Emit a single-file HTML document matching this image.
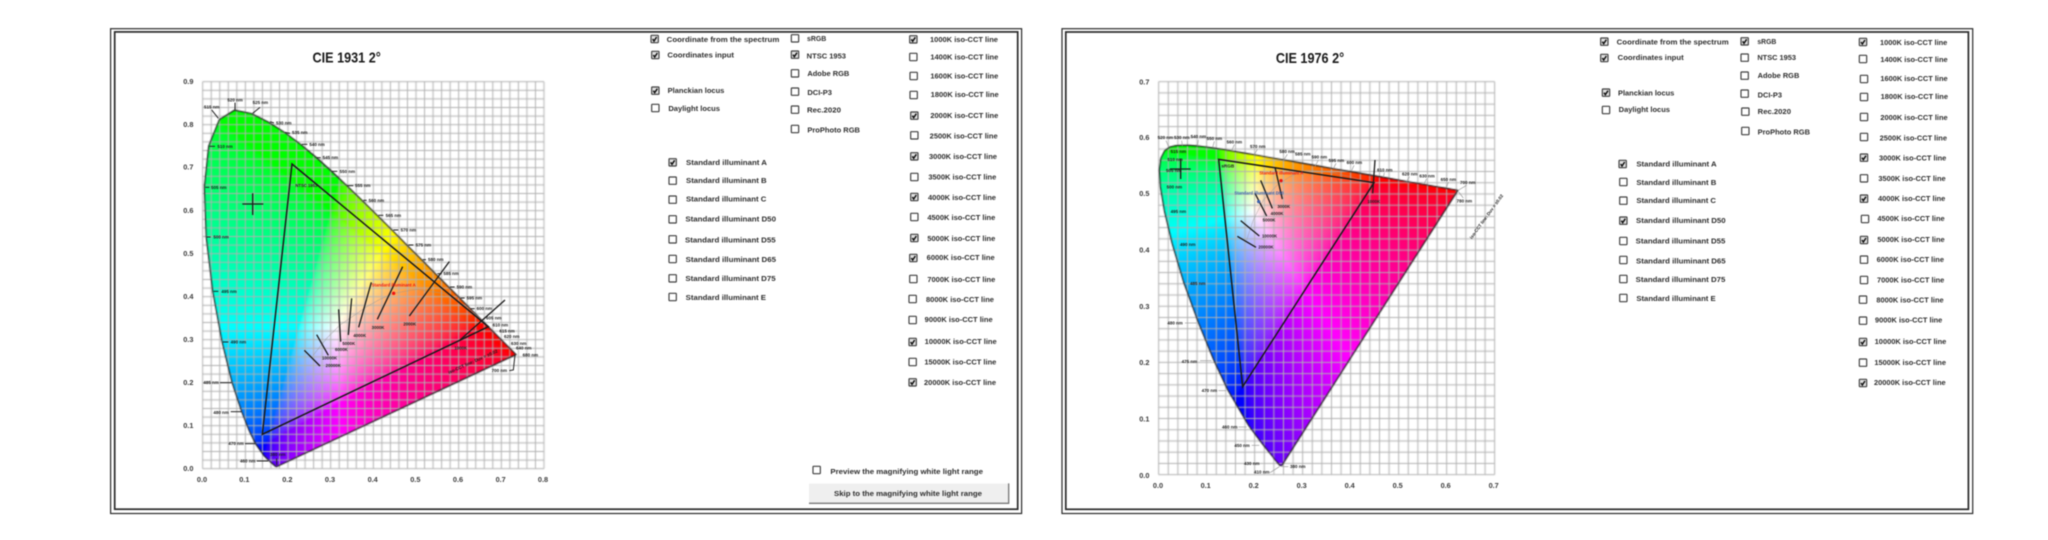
<!DOCTYPE html>
<html><head><meta charset="utf-8"><title>CIE</title>
<style>
html,body{margin:0;padding:0;background:#fff;width:2048px;height:540px;overflow:hidden}
#w{position:relative;width:2048px;height:540px;filter:blur(.5px);background:#fff}
canvas,svg{position:absolute;left:0;top:0;width:2048px;height:540px}
text{font-family:"Liberation Sans",sans-serif;dominant-baseline:central}
.b text{font-weight:700;font-size:23px;fill:#2e2e2e}
.a text{font-weight:700;font-size:22px;fill:#3c3c3c;text-anchor:middle}
.n text{font-size:13.5px;font-weight:700;fill:#1c1c1c}
.k text{font-size:13px;font-weight:700;fill:#222}
.t line,.t polyline{stroke:#222;stroke-width:3;fill:none}
.g line{stroke:#999;stroke-width:2}
.c line{stroke:#1c1c1c;stroke-width:4}
</style></head><body>
<div id="w">
<canvas id="cv" width="2048" height="540"></canvas>
<svg viewBox="0 0 2048 540" xmlns="http://www.w3.org/2000/svg">
<defs>
<g id="c0"><rect x="-11" y="-11" width="22" height="22" rx="1.5" fill="#fff" stroke="#404040" stroke-width="3.5"/></g>
<g id="c1"><rect x="-11" y="-11" width="22" height="22" rx="1.5" fill="#e2e2e2" stroke="#404040" stroke-width="3.5"/><path d="M-6,0 L-2,6 L6,-6" fill="none" stroke="#111" stroke-width="4.5"/></g>
</defs>
<!-- frames -->
<g fill="none" stroke="#2a2a2a">
<rect x="110.6" y="28.7" width="911" height="484.8" stroke-width="1.2"/>
<rect x="114.7" y="31.9" width="903" height="477.3" stroke-width="1.7"/>
<rect x="1062" y="28.7" width="910.7" height="484.8" stroke-width="1.2"/>
<rect x="1065.8" y="32" width="902.6" height="477.3" stroke-width="1.7"/>
</g>

<!-- chart 1 -->
<g transform="translate(100,20) scale(.33333)">
<text x="740" y="115" text-anchor="middle" font-size="43" font-weight="700" fill="#1a1a1a" textLength="205" lengthAdjust="spacingAndGlyphs">CIE 1931 2°</text>
<g class="a">
<text x="265" y="185">0.9</text><text x="265" y="313">0.8</text><text x="265" y="441">0.7</text><text x="265" y="572">0.6</text><text x="265" y="700">0.5</text><text x="265" y="829">0.4</text><text x="265" y="959">0.3</text><text x="265" y="1088">0.2</text><text x="265" y="1216">0.1</text><text x="265" y="1346">0.0</text>
<text x="306" y="1378">0.0</text><text x="433" y="1378">0.1</text><text x="562" y="1378">0.2</text><text x="690" y="1378">0.3</text><text x="818" y="1378">0.4</text><text x="946" y="1378">0.5</text><text x="1074" y="1378">0.6</text><text x="1202" y="1378">0.7</text><text x="1329" y="1378">0.8</text>
</g>
<g class="t">
<line x1="335" y1="270" x2="355" y2="295"/><line x1="405" y1="248" x2="405" y2="270"/><line x1="480" y1="262" x2="458" y2="280"/>
<line x1="510" y1="305" x2="522" y2="309"/><line x1="555" y1="337" x2="570" y2="340"/><line x1="605" y1="373" x2="622" y2="373"/><line x1="650" y1="413" x2="662" y2="413"/><line x1="695" y1="454" x2="712" y2="454"/><line x1="742" y1="497" x2="760" y2="497"/><line x1="790" y1="541" x2="800" y2="541"/><line x1="835" y1="586" x2="850" y2="586"/><line x1="880" y1="630" x2="895" y2="630"/><line x1="925" y1="675" x2="940" y2="675"/><line x1="968" y1="719" x2="978" y2="719"/><line x1="1012" y1="761" x2="1025" y2="761"/><line x1="1050" y1="801" x2="1064" y2="801"/><line x1="1082" y1="834" x2="1094" y2="834"/><line x1="1112" y1="866" x2="1124" y2="866"/>
<line x1="328" y1="379" x2="345" y2="379"/><line x1="316" y1="502" x2="328" y2="502"/><line x1="320" y1="651" x2="332" y2="651"/><line x1="340" y1="814" x2="355" y2="814"/><line x1="368" y1="966" x2="385" y2="966"/><line x1="360" y1="1088" x2="395" y2="1088"/><line x1="392" y1="1175" x2="425" y2="1175"/><line x1="435" y1="1271" x2="465" y2="1271"/><line x1="470" y1="1323" x2="505" y2="1323"/><line x1="530" y1="1315" x2="530" y2="1335"/>
<polyline points="1228,1052 1240,1050 1245,1005"/>
</g>
<g class="n">
<text x="312" y="261">515 nm</text><text x="382" y="240">520 nm</text><text x="458" y="248">525 nm</text><text x="528" y="309">530 nm</text><text x="576" y="337">535 nm</text><text x="628" y="373">540 nm</text><text x="668" y="413">545 nm</text><text x="719" y="454">550 nm</text><text x="765" y="496">555 nm</text><text x="806" y="541">560 nm</text><text x="857" y="586">565 nm</text><text x="902" y="630">570 nm</text><text x="947" y="675">575 nm</text><text x="984" y="719">580 nm</text><text x="1030" y="761">585 nm</text><text x="1070" y="801">590 nm</text><text x="1100" y="834">595 nm</text><text x="1130" y="866">600 nm</text><text x="1158" y="894">605 nm</text><text x="1178" y="915">610 nm</text><text x="1198" y="933">615 nm</text><text x="1212" y="950">620 nm</text><text x="1233" y="971">630 nm</text><text x="1248" y="984">640 nm</text><text x="1268" y="1005">680 nm</text><text x="1175" y="1052">700 nm</text>
<text x="352" y="379">510 nm</text><text x="333" y="502">505 nm</text><text x="340" y="651">500 nm</text><text x="364" y="814">495 nm</text><text x="392" y="966">490 nm</text><text x="310" y="1088">485 nm</text><text x="340" y="1177">480 nm</text><text x="385" y="1271">470 nm</text><text x="420" y="1323">460 nm</text><text x="510" y="1303">380 nm</text>
<text x="0" y="0" transform="translate(1045,1058) rotate(-24)" font-size="13">iso-CCT line: Duv = ±0.02</text>
</g>
<polyline points="640,1005 680,955 720,915 760,888 800,860 840,838 880,820 950,808 1030,820 1100,860 1150,905" fill="none" stroke="#999" stroke-width="2" stroke-dasharray="3 2"/>
<polygon points="576,432 1165,920 487,1243" fill="none" stroke="#1a1a1a" stroke-width="4.5"/>
<text x="586" y="498" font-size="15" font-weight="700" fill="#222" textLength="66" lengthAdjust="spacingAndGlyphs">NTSC 1953</text>
<g class="c">
<line x1="716" y1="868" x2="722" y2="965"/><line x1="755" y1="835" x2="745" y2="945"/><line x1="814" y1="787" x2="776" y2="922"/><line x1="908" y1="740" x2="832" y2="898"/><line x1="1048" y1="725" x2="928" y2="888"/><line x1="1215" y1="840" x2="1080" y2="960"/><line x1="650" y1="944" x2="685" y2="1006"/><line x1="613" y1="991" x2="660" y2="1038"/>
<line x1="427" y1="552" x2="490" y2="552" stroke-width="5"/><line x1="458" y1="520" x2="458" y2="585" stroke-width="5"/>
</g>
<g class="k">
<text x="705" y="988">6000K</text><text x="727" y="970">5000K</text><text x="760" y="946">4000K</text><text x="815" y="923">3000K</text><text x="910" y="912">2000K</text><text x="1063" y="984">1000K</text><text x="666" y="1014">10000K</text><text x="677" y="1036">20000K</text>
</g>
<circle cx="881" cy="820" r="5" fill="#ee1111"/>
<text x="815" y="797" font-size="15" font-weight="700" fill="#ee1111" textLength="132" lengthAdjust="spacingAndGlyphs">Standard illuminant A</text>
</g>

<!-- panel 1 -->
<g transform="translate(630,20) scale(.33333)">
<g class="b">
<text x="110" y="58" textLength="338" lengthAdjust="spacingAndGlyphs">Coordinate from the spectrum</text>
<text x="112" y="105" textLength="200" lengthAdjust="spacingAndGlyphs">Coordinates input</text>
<text x="113" y="212" textLength="170" lengthAdjust="spacingAndGlyphs">Planckian locus</text>
<text x="115" y="265" textLength="155" lengthAdjust="spacingAndGlyphs">Daylight locus</text>
<text x="168" y="427" textLength="243" lengthAdjust="spacingAndGlyphs">Standard illuminant A</text>
<text x="168" y="482" textLength="242" lengthAdjust="spacingAndGlyphs">Standard illuminant B</text>
<text x="168" y="537" textLength="241" lengthAdjust="spacingAndGlyphs">Standard illuminant C</text>
<text x="166" y="597" textLength="272" lengthAdjust="spacingAndGlyphs">Standard illuminant D50</text>
<text x="165" y="660" textLength="272" lengthAdjust="spacingAndGlyphs">Standard illuminant D55</text>
<text x="167" y="718" textLength="271" lengthAdjust="spacingAndGlyphs">Standard illuminant D65</text>
<text x="166" y="775" textLength="271" lengthAdjust="spacingAndGlyphs">Standard illuminant D75</text>
<text x="167" y="833" textLength="241" lengthAdjust="spacingAndGlyphs">Standard illuminant E</text>
<text x="531" y="56" textLength="58" lengthAdjust="spacingAndGlyphs">sRGB</text>
<text x="530" y="108" textLength="118" lengthAdjust="spacingAndGlyphs">NTSC 1953</text>
<text x="532" y="160" textLength="126" lengthAdjust="spacingAndGlyphs">Adobe RGB</text>
<text x="532" y="218" textLength="74" lengthAdjust="spacingAndGlyphs">DCI-P3</text>
<text x="531" y="270" textLength="102" lengthAdjust="spacingAndGlyphs">Rec.2020</text>
<text x="532" y="330" textLength="158" lengthAdjust="spacingAndGlyphs">ProPhoto RGB</text>
<text x="900" y="58" textLength="204" lengthAdjust="spacingAndGlyphs">1000K iso-CCT line</text>
<text x="901" y="111" textLength="204" lengthAdjust="spacingAndGlyphs">1400K iso-CCT line</text>
<text x="901" y="168" textLength="204" lengthAdjust="spacingAndGlyphs">1600K iso-CCT line</text>
<text x="902" y="223" textLength="204" lengthAdjust="spacingAndGlyphs">1800K iso-CCT line</text>
<text x="901" y="286" textLength="204" lengthAdjust="spacingAndGlyphs">2000K iso-CCT line</text>
<text x="899" y="348" textLength="204" lengthAdjust="spacingAndGlyphs">2500K iso-CCT line</text>
<text x="897" y="409" textLength="204" lengthAdjust="spacingAndGlyphs">3000K iso-CCT line</text>
<text x="895" y="471" textLength="204" lengthAdjust="spacingAndGlyphs">3500K iso-CCT line</text>
<text x="894" y="532" textLength="204" lengthAdjust="spacingAndGlyphs">4000K iso-CCT line</text>
<text x="892" y="592" textLength="204" lengthAdjust="spacingAndGlyphs">4500K iso-CCT line</text>
<text x="892" y="655" textLength="204" lengthAdjust="spacingAndGlyphs">5000K iso-CCT line</text>
<text x="890" y="713" textLength="204" lengthAdjust="spacingAndGlyphs">6000K iso-CCT line</text>
<text x="892" y="778" textLength="204" lengthAdjust="spacingAndGlyphs">7000K iso-CCT line</text>
<text x="888" y="838" textLength="204" lengthAdjust="spacingAndGlyphs">8000K iso-CCT line</text>
<text x="884" y="898" textLength="204" lengthAdjust="spacingAndGlyphs">9000K iso-CCT line</text>
<text x="884" y="964" textLength="216" lengthAdjust="spacingAndGlyphs">10000K iso-CCT line</text>
<text x="883" y="1026" textLength="216" lengthAdjust="spacingAndGlyphs">15000K iso-CCT line</text>
<text x="882" y="1087" textLength="216" lengthAdjust="spacingAndGlyphs">20000K iso-CCT line</text>
<text x="601" y="1354" textLength="458" lengthAdjust="spacingAndGlyphs">Preview the magnifying white light range</text>
</g>
<use href="#c1" x="74" y="57"/><use href="#c1" x="76" y="105"/><use href="#c1" x="76" y="212"/><use href="#c0" x="76" y="264"/>
<use href="#c1" x="128" y="427"/><use href="#c0" x="128" y="482"/><use href="#c0" x="128" y="539"/><use href="#c0" x="128" y="598"/><use href="#c0" x="128" y="658"/><use href="#c0" x="128" y="717"/><use href="#c0" x="128" y="775"/><use href="#c0" x="128" y="831"/>
<use href="#c0" x="495" y="55"/><use href="#c1" x="495" y="104"/><use href="#c0" x="495" y="160"/><use href="#c0" x="495" y="215"/><use href="#c0" x="495" y="269"/><use href="#c0" x="495" y="327"/>
<use href="#c1" x="850" y="58"/><use href="#c0" x="850" y="111"/><use href="#c0" x="851" y="168"/><use href="#c0" x="851" y="225"/><use href="#c1" x="853" y="287"/><use href="#c0" x="853" y="346"/><use href="#c1" x="853" y="409"/><use href="#c0" x="853" y="471"/><use href="#c1" x="853" y="531"/><use href="#c0" x="853" y="591"/><use href="#c1" x="853" y="654"/><use href="#c1" x="850" y="714"/><use href="#c0" x="850" y="777"/><use href="#c0" x="848" y="837"/><use href="#c0" x="848" y="900"/><use href="#c1" x="848" y="966"/><use href="#c0" x="848" y="1026"/><use href="#c1" x="848" y="1087"/>
<use href="#c0" x="560" y="1350"/>
<rect x="537" y="1391" width="600" height="59" fill="#efefef"/>
<path d="M1136,1390 V1450 H537" fill="none" stroke="#777" stroke-width="4"/>
<text x="612" y="1420" font-size="23" font-weight="700" fill="#2e2e2e" textLength="444" lengthAdjust="spacingAndGlyphs">Skip to the magnifying white light range</text>
</g>

<!-- chart 2 -->
<g transform="translate(1050,20) scale(.33333)">
<text x="780" y="117" text-anchor="middle" font-size="43" font-weight="700" fill="#1a1a1a" textLength="205" lengthAdjust="spacingAndGlyphs">CIE 1976 2°</text>
<g class="a">
<text x="283" y="186">0.7</text><text x="283" y="353">0.6</text><text x="283" y="521">0.5</text><text x="283" y="690">0.4</text><text x="283" y="859">0.3</text><text x="283" y="1028">0.2</text><text x="283" y="1197">0.1</text><text x="283" y="1366">0.0</text>
<text x="324" y="1397">0.0</text><text x="467" y="1397">0.1</text><text x="611" y="1397">0.2</text><text x="755" y="1397">0.3</text><text x="899" y="1397">0.4</text><text x="1043" y="1397">0.5</text><text x="1187" y="1397">0.6</text><text x="1331" y="1397">0.7</text>
</g>
<g class="g">
<line x1="348" y1="362" x2="356" y2="380"/><line x1="395" y1="362" x2="397" y2="378"/><line x1="445" y1="360" x2="442" y2="378"/><line x1="493" y1="364" x2="488" y2="382"/><line x1="553" y1="374" x2="546" y2="390"/><line x1="622" y1="388" x2="612" y2="405"/><line x1="712" y1="403" x2="700" y2="422"/><line x1="805" y1="420" x2="795" y2="440"/><line x1="858" y1="430" x2="850" y2="446"/><line x1="912" y1="436" x2="905" y2="452"/><line x1="1003" y1="458" x2="1000" y2="472"/><line x1="1078" y1="470" x2="1070" y2="485"/><line x1="1130" y1="476" x2="1122" y2="492"/><line x1="1195" y1="486" x2="1190" y2="500"/><line x1="1250" y1="496" x2="1226" y2="510"/><line x1="1240" y1="534" x2="1226" y2="516"/>
<line x1="405" y1="909" x2="440" y2="909"/><line x1="450" y1="1022" x2="485" y2="1022"/><line x1="505" y1="1112" x2="528" y2="1112"/><line x1="565" y1="1221" x2="590" y2="1221"/><line x1="605" y1="1276" x2="628" y2="1276"/><line x1="660" y1="1358" x2="688" y2="1340"/><line x1="695" y1="1340" x2="715" y2="1340"/>
</g>
<g class="n">
<text x="323" y="353">520 nm</text><text x="372" y="353">530 nm</text><text x="422" y="350">540 nm</text><text x="470" y="356">550 nm</text><text x="530" y="366">560 nm</text><text x="600" y="379">570 nm</text><text x="688" y="395">580 nm</text><text x="735" y="402">585 nm</text><text x="785" y="411">590 nm</text><text x="836" y="421">595 nm</text><text x="890" y="428">600 nm</text><text x="981" y="450">610 nm</text><text x="1056" y="462">620 nm</text><text x="1108" y="468">630 nm</text><text x="1172" y="478">650 nm</text><text x="1230" y="488">700 nm</text><text x="1220" y="543">780 nm</text>
<text x="362" y="395">515 nm</text><text x="352" y="418">510 nm</text><text x="348" y="452">505 nm</text><text x="350" y="501">500 nm</text><text x="362" y="574">495 nm</text><text x="390" y="673">490 nm</text><text x="420" y="790">485 nm</text><text x="352" y="909">480 nm</text><text x="395" y="1024">475 nm</text><text x="455" y="1112">470 nm</text><text x="516" y="1221">460 nm</text><text x="553" y="1276">450 nm</text><text x="582" y="1330">430 nm</text><text x="612" y="1356">410 nm</text><text x="720" y="1340">380 nm</text>
<text x="0" y="0" transform="translate(1262,655) rotate(-54)" font-size="13">iso-CCT line: Duv = ±0.02</text>
</g>
<polyline points="590,660 610,600 640,540 680,497 720,470 770,450 830,455 900,470 968,490" fill="none" stroke="#999" stroke-width="2" stroke-dasharray="3 2"/>
<polygon points="506,418 972,488 578,1100" fill="none" stroke="#1a1a1a" stroke-width="4.5"/>
<text x="514" y="438" font-size="14" font-weight="700" fill="#222">sRGB</text>
<g class="c">
<line x1="975" y1="420" x2="968" y2="520"/><line x1="675" y1="442" x2="697" y2="537"/><line x1="632" y1="481" x2="667" y2="565"/><line x1="615" y1="520" x2="650" y2="588"/><line x1="572" y1="602" x2="628" y2="648"/><line x1="562" y1="649" x2="618" y2="682"/>
<line x1="360" y1="447" x2="422" y2="447" stroke-width="5"/><line x1="392" y1="416" x2="392" y2="477" stroke-width="5"/>
</g>
<g class="k">
<text x="952" y="544">1000K</text><text x="682" y="559">3000K</text><text x="662" y="580">4000K</text><text x="638" y="600">5000K</text><text x="636" y="648">10000K</text><text x="625" y="681">20000K</text>
</g>
<circle cx="693" cy="482" r="5" fill="#ee1111"/>
<circle cx="626" cy="545" r="5" fill="#3a62b0"/>
<text x="628" y="460" font-size="15" font-weight="700" fill="#ee1111" textLength="132" lengthAdjust="spacingAndGlyphs">Standard illuminant A</text>
<text x="553" y="520" font-size="15" font-weight="700" fill="#3a62b0" textLength="148" lengthAdjust="spacingAndGlyphs">Standard illuminant D50</text>
</g>

<!-- panel 2 -->
<g transform="translate(1580,20) scale(.33333)">
<g class="b">
<text x="110" y="66" textLength="336" lengthAdjust="spacingAndGlyphs">Coordinate from the spectrum</text>
<text x="113" y="113" textLength="198" lengthAdjust="spacingAndGlyphs">Coordinates input</text>
<text x="114" y="219" textLength="169" lengthAdjust="spacingAndGlyphs">Planckian locus</text>
<text x="116" y="269" textLength="154" lengthAdjust="spacingAndGlyphs">Daylight locus</text>
<text x="169" y="432" textLength="241" lengthAdjust="spacingAndGlyphs">Standard illuminant A</text>
<text x="169" y="487" textLength="240" lengthAdjust="spacingAndGlyphs">Standard illuminant B</text>
<text x="169" y="541" textLength="239" lengthAdjust="spacingAndGlyphs">Standard illuminant C</text>
<text x="168" y="601" textLength="269" lengthAdjust="spacingAndGlyphs">Standard illuminant D50</text>
<text x="167" y="663" textLength="269" lengthAdjust="spacingAndGlyphs">Standard illuminant D55</text>
<text x="168" y="723" textLength="269" lengthAdjust="spacingAndGlyphs">Standard illuminant D65</text>
<text x="167" y="778" textLength="269" lengthAdjust="spacingAndGlyphs">Standard illuminant D75</text>
<text x="169" y="835" textLength="238" lengthAdjust="spacingAndGlyphs">Standard illuminant E</text>
<text x="532" y="64" textLength="57" lengthAdjust="spacingAndGlyphs">sRGB</text>
<text x="532" y="113" textLength="116" lengthAdjust="spacingAndGlyphs">NTSC 1953</text>
<text x="533" y="167" textLength="125" lengthAdjust="spacingAndGlyphs">Adobe RGB</text>
<text x="533" y="225" textLength="73" lengthAdjust="spacingAndGlyphs">DCI-P3</text>
<text x="533" y="274" textLength="100" lengthAdjust="spacingAndGlyphs">Rec.2020</text>
<text x="533" y="336" textLength="157" lengthAdjust="spacingAndGlyphs">ProPhoto RGB</text>
<text x="900" y="68" textLength="202" lengthAdjust="spacingAndGlyphs">1000K iso-CCT line</text>
<text x="901" y="118" textLength="202" lengthAdjust="spacingAndGlyphs">1400K iso-CCT line</text>
<text x="901" y="175" textLength="202" lengthAdjust="spacingAndGlyphs">1600K iso-CCT line</text>
<text x="902" y="230" textLength="202" lengthAdjust="spacingAndGlyphs">1800K iso-CCT line</text>
<text x="901" y="292" textLength="202" lengthAdjust="spacingAndGlyphs">2000K iso-CCT line</text>
<text x="899" y="354" textLength="202" lengthAdjust="spacingAndGlyphs">2500K iso-CCT line</text>
<text x="897" y="414" textLength="202" lengthAdjust="spacingAndGlyphs">3000K iso-CCT line</text>
<text x="895" y="476" textLength="202" lengthAdjust="spacingAndGlyphs">3500K iso-CCT line</text>
<text x="894" y="536" textLength="202" lengthAdjust="spacingAndGlyphs">4000K iso-CCT line</text>
<text x="892" y="596" textLength="202" lengthAdjust="spacingAndGlyphs">4500K iso-CCT line</text>
<text x="892" y="658" textLength="202" lengthAdjust="spacingAndGlyphs">5000K iso-CCT line</text>
<text x="890" y="718" textLength="202" lengthAdjust="spacingAndGlyphs">6000K iso-CCT line</text>
<text x="891" y="780" textLength="202" lengthAdjust="spacingAndGlyphs">7000K iso-CCT line</text>
<text x="889" y="840" textLength="202" lengthAdjust="spacingAndGlyphs">8000K iso-CCT line</text>
<text x="885" y="900" textLength="202" lengthAdjust="spacingAndGlyphs">9000K iso-CCT line</text>
<text x="884" y="965" textLength="215" lengthAdjust="spacingAndGlyphs">10000K iso-CCT line</text>
<text x="883" y="1027" textLength="215" lengthAdjust="spacingAndGlyphs">15000K iso-CCT line</text>
<text x="882" y="1087" textLength="215" lengthAdjust="spacingAndGlyphs">20000K iso-CCT line</text>
</g>
<use href="#c1" x="73" y="65"/><use href="#c1" x="73" y="114"/><use href="#c1" x="78" y="218"/><use href="#c0" x="78" y="270"/>
<use href="#c1" x="128" y="432"/><use href="#c0" x="130" y="486"/><use href="#c0" x="130" y="542"/><use href="#c1" x="130" y="602"/><use href="#c0" x="130" y="663"/><use href="#c0" x="130" y="720"/><use href="#c0" x="130" y="777"/><use href="#c0" x="130" y="834"/>
<use href="#c1" x="494" y="64"/><use href="#c0" x="494" y="113"/><use href="#c0" x="494" y="167"/><use href="#c0" x="494" y="221"/><use href="#c0" x="496" y="275"/><use href="#c0" x="496" y="333"/>
<use href="#c1" x="849" y="66"/><use href="#c0" x="849" y="117"/><use href="#c0" x="852" y="177"/><use href="#c0" x="852" y="231"/><use href="#c0" x="852" y="291"/><use href="#c0" x="852" y="351"/><use href="#c1" x="852" y="413"/><use href="#c0" x="852" y="475"/><use href="#c1" x="852" y="536"/><use href="#c0" x="855" y="597"/><use href="#c1" x="852" y="660"/><use href="#c0" x="852" y="719"/><use href="#c0" x="852" y="780"/><use href="#c0" x="849" y="839"/><use href="#c0" x="849" y="902"/><use href="#c1" x="849" y="966"/><use href="#c0" x="849" y="1028"/><use href="#c1" x="849" y="1089"/>
</g>
</svg>
</div>
<script>
(function(){
var L=[[.1741,.005],[.1733,.0048],[.1726,.0048],[.1714,.0051],[.1689,.0069],[.1644,.0109],[.1566,.0177],[.144,.0297],[.1241,.0578],[.1096,.0868],[.0913,.1327],[.0687,.2007],[.0454,.295],[.0235,.4127],[.0082,.5384],[.0039,.6548],[.0139,.7502],[.0389,.812],[.0743,.8338],[.1142,.8262],[.1547,.8059],[.1929,.7816],[.2296,.7543],[.2658,.7243],[.3016,.6923],[.3373,.6589],[.3731,.6245],[.4087,.5896],[.4441,.5547],[.4788,.5202],[.5125,.4866],[.5448,.4544],[.5752,.4242],[.6029,.3965],[.627,.3725],[.6658,.334],[.6915,.3083],[.7079,.292],[.719,.2809],[.726,.274],[.73,.27],[.7334,.2666],[.7347,.2653]];
var ctx=document.getElementById('cv').getContext('2d');
function col(x,y){
  if(y<=0.001)y=0.001;
  var X=x/y,Y=1,Z=(1-x-y)/y;
  var r=3.2406*X-1.5372*Y-.4986*Z,g=-.9689*X+1.8758*Y+.0415*Z,b=.0557*X-.204*Y+1.057*Z;
  r=Math.max(r,0);g=Math.max(g,0);b=Math.max(b,0);
  var m=Math.max(r,g,b)||1,e=1/2.1;
  return [255*Math.pow(r/m,e),255*Math.pow(g/m,e),255*Math.pow(b/m,e)];
}
function chart(o){
  var W=Math.ceil(o.xm*o.sx),H=Math.ceil(o.ym*o.sy);
  var c=document.createElement('canvas');c.width=W;c.height=H;
  var cx=c.getContext('2d'),d=cx.createImageData(W,H);
  for(var j=0;j<H;j++)for(var i=0;i<W;i++){
    var a=(i+.5)/o.sx,b=(H-j-.5)/o.sy,p=o.inv(a,b),q=col(p[0],p[1]),k=4*(j*W+i);
    d.data[k]=q[0];d.data[k+1]=q[1];d.data[k+2]=q[2];d.data[k+3]=255;
  }
  cx.putImageData(d,0,0);
  var pts=L.map(function(p){var u=o.fwd(p[0],p[1]);return [o.x0+u[0]*o.sx,o.y0-u[1]*o.sy];});
  function trace(){ctx.beginPath();pts.forEach(function(p,n){n?ctx.lineTo(p[0],p[1]):ctx.moveTo(p[0],p[1]);});ctx.closePath();}
  ctx.save();trace();ctx.clip();ctx.drawImage(c,o.x0,o.y0-H);ctx.restore();
  ctx.strokeStyle='#b2b2b2';ctx.lineWidth=1;ctx.beginPath();
  var n=Math.round(o.xm/.02);
  for(var i2=0;i2<=n;i2++){var x=o.x0+i2*.02*o.sx;ctx.moveTo(x,o.y0);ctx.lineTo(x,o.y0-o.ym*o.sy);}
  n=Math.round(o.ym/.02);
  for(var j2=0;j2<=n;j2++){var y=o.y0-j2*.02*o.sy;ctx.moveTo(o.x0,y);ctx.lineTo(o.x0+o.xm*o.sx,y);}
  ctx.stroke();
  trace();ctx.strokeStyle='#1a1a1a';ctx.lineWidth=1.1;ctx.stroke();
}
chart({x0:202.7,y0:468.7,sx:426.6,sy:430,xm:.8,ym:.9,
  inv:function(a,b){return [a,b];},fwd:function(a,b){return [a,b];}});
chart({x0:1158.67,y0:474.67,sx:480,sy:561.4,xm:.7,ym:.7,
  inv:function(u,v){var d=6*u-16*v+12;return [9*u/d,4*v/d];},
  fwd:function(x,y){var d=-2*x+12*y+3;return [4*x/d,9*y/d];}});
})();
</script>
</body></html>
